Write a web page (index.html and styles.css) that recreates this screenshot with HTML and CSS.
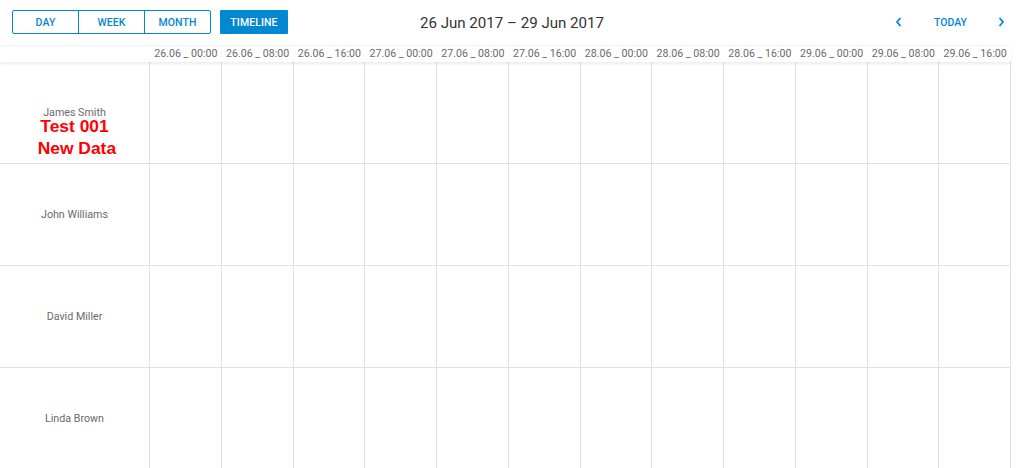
FILE: index.html
```html
<!DOCTYPE html>
<html>
<head>
<meta charset="utf-8">
<link rel="stylesheet" href="styles.css">
</head>
<body>
<div class="scheduler">
  <div class="toolbar">
    <div class="views">
      <div class="seg">
        <span class="tab">DAY</span>
        <span class="tab">WEEK</span>
        <span class="tab">MONTH</span>
      </div>
      <span class="tab active">TIMELINE</span>
    </div>
    <div class="title">26 Jun 2017 – 29 Jun 2017</div>
    <div class="nav">
      <span class="arrow"><svg width="8" height="10" viewBox="0 0 8 10"><polyline points="5.5,1 2,5 5.5,9" fill="none" stroke="#0288d1" stroke-width="1.8"/></svg></span>
      <span class="today">TODAY</span>
      <span class="arrow"><svg width="8" height="10" viewBox="0 0 8 10"><polyline points="2.5,1 6,5 2.5,9" fill="none" stroke="#0288d1" stroke-width="1.8"/></svg></span>
    </div>
  </div>
  <div class="scale">
    <div class="corner"></div>
    <div class="sc">26.06 _ 00:00</div>
    <div class="sc">26.06 _ 08:00</div>
    <div class="sc">26.06 _ 16:00</div>
    <div class="sc">27.06 _ 00:00</div>
    <div class="sc">27.06 _ 08:00</div>
    <div class="sc">27.06 _ 16:00</div>
    <div class="sc">28.06 _ 00:00</div>
    <div class="sc">28.06 _ 08:00</div>
    <div class="sc">28.06 _ 16:00</div>
    <div class="sc">29.06 _ 00:00</div>
    <div class="sc">29.06 _ 08:00</div>
    <div class="sc">29.06 _ 16:00</div>
  </div>
  <div class="data">
    <div class="row">
      <div class="label">
        <div class="name">James Smith</div>
        <div class="extra">Test 001<br>&nbsp;New Data</div>
      </div>
      <div class="cell"></div><div class="cell"></div><div class="cell"></div><div class="cell"></div>
      <div class="cell"></div><div class="cell"></div><div class="cell"></div><div class="cell"></div>
      <div class="cell"></div><div class="cell"></div><div class="cell"></div><div class="cell"></div>
    </div>
    <div class="row">
      <div class="label"><div class="name">John Williams</div></div>
      <div class="cell"></div><div class="cell"></div><div class="cell"></div><div class="cell"></div>
      <div class="cell"></div><div class="cell"></div><div class="cell"></div><div class="cell"></div>
      <div class="cell"></div><div class="cell"></div><div class="cell"></div><div class="cell"></div>
    </div>
    <div class="row">
      <div class="label"><div class="name">David Miller</div></div>
      <div class="cell"></div><div class="cell"></div><div class="cell"></div><div class="cell"></div>
      <div class="cell"></div><div class="cell"></div><div class="cell"></div><div class="cell"></div>
      <div class="cell"></div><div class="cell"></div><div class="cell"></div><div class="cell"></div>
    </div>
    <div class="row">
      <div class="label"><div class="name">Linda Brown</div></div>
      <div class="cell"></div><div class="cell"></div><div class="cell"></div><div class="cell"></div>
      <div class="cell"></div><div class="cell"></div><div class="cell"></div><div class="cell"></div>
      <div class="cell"></div><div class="cell"></div><div class="cell"></div><div class="cell"></div>
    </div>
  </div>
</div>
</body>
</html>
```

FILE: styles.css
```css
html, body {
  margin: 0;
  padding: 0;
  background: #fff;
  overflow: hidden;
}
.scheduler {
  width: 1024px;
  height: 468px;
  font-family: Roboto, "Liberation Sans", sans-serif;
  overflow: hidden;
}
.toolbar {
  height: 45px;
  display: grid;
  grid-template-columns: 1fr auto 1fr;
  align-items: center;
  padding: 0 0 1px 0;
  box-sizing: border-box;
}
.views {
  display: flex;
  align-items: center;
  gap: 9px;
  padding-left: 12px;
}
.seg {
  display: flex;
  border: 1px solid #0288d1;
  border-radius: 2px;
  height: 24px;
  box-sizing: border-box;
  width: 199px;
}
.seg .tab {
  flex: 1;
  border-right: 1px solid #0288d1;
}
.seg .tab:last-child {
  border-right: none;
}
.tab {
  display: flex;
  align-items: center;
  justify-content: center;
  color: #0288d1;
  font-size: 10.5px;
  font-weight: 500;
  letter-spacing: 0.1px;
}
.tab.active {
  background: #0288d1;
  color: #fff;
  width: 68px;
  height: 24px;
  border-radius: 1px;
}
.title {
  font-size: 15.1px;
  color: #333;
  padding-top: 1px;
}
.nav {
  display: flex;
  align-items: center;
  justify-content: flex-end;
  padding-right: 19px;
}
.arrow {
  display: flex;
  width: 8px;
  height: 10px;
}
.today {
  color: #0288d1;
  font-size: 10.5px;
  font-weight: 500;
  margin: 0 30px 0 31px;
}
.scale {
  display: grid;
  grid-template-columns: 150px repeat(12, 1fr);
  width: 1011px;
  height: 17px;
  line-height: 16px;
  border-top: 1px solid #f3f3f3;
  box-sizing: border-box;
  box-shadow: 0 2px 3px rgba(0,0,0,0.08);
  position: relative;
  z-index: 1;
}
.sc {
  font-size: 10.6px;
  color: #6a6a6a;
  text-align: center;
  white-space: nowrap;
}
.data {
  width: 1011px;
}
.row {
  display: grid;
  grid-template-columns: 150px repeat(12, 1fr);
  height: 102px;
  border-bottom: 1px solid #e2e2e2;
  box-sizing: border-box;
}
.label, .cell {
  border-right: 1px solid #e2e2e2;
}
.label {
  display: flex;
  flex-direction: column;
  align-items: center;
  justify-content: center;
  text-align: center;
}
.name {
  font-size: 10.7px;
  color: #6a6a6a;
  line-height: 14px;
}
.extra {
  font-family: "Liberation Sans", Arial, sans-serif;
  font-weight: bold;
  font-size: 17.4px;
  line-height: 22.5px;
  color: #ff0000;
  margin-top: -5px;
  margin-bottom: -40px;
}
```
